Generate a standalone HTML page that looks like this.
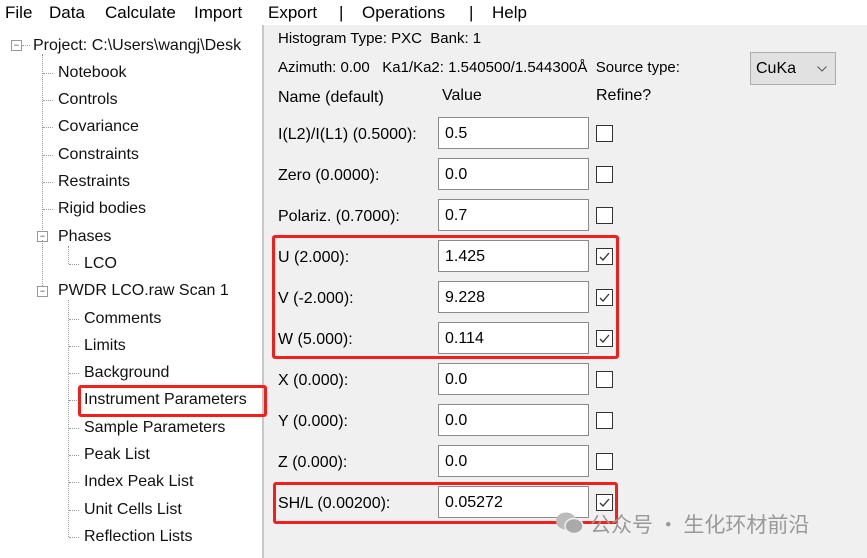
<!DOCTYPE html><html><head><meta charset="utf-8"><style>
body{margin:0;width:867px;height:558px;overflow:hidden;background:#f0f0f0;font-family:"Liberation Sans","Noto Sans CJK SC",sans-serif;font-size:16px;color:#000;position:relative}
.a{position:absolute;white-space:nowrap}
#menu{position:absolute;left:0;top:0;width:867px;height:25px;background:#fff;font-size:17px}
#tree{position:absolute;left:0;top:25px;width:262px;height:533px;background:#fff;border-right:2px solid #c8c8c8}
.t{position:absolute;white-space:nowrap;line-height:20px;color:#111}
.inp{position:absolute;left:438px;width:149px;height:30px;background:#fff;border:1px solid #8a8a8a;line-height:32px;text-indent:6px}
.cb{position:absolute;left:596px;width:15px;height:15px;border:1px solid #333;background:#fff}
.cb svg{position:absolute;left:1px;top:1px}
.lab{position:absolute;left:278px;white-space:nowrap;line-height:20px}
.red{position:absolute;border:3px solid #f0201c;border-radius:3px}
.vl{position:absolute;border-left:1px dotted #999}
.hl{position:absolute;border-top:1px dotted #999;width:10px}
</style></head><body>
<div id="menu">
<span class="a" style="left:5px;top:3px">File</span>
<span class="a" style="left:49px;top:3px">Data</span>
<span class="a" style="left:105px;top:3px">Calculate</span>
<span class="a" style="left:194px;top:3px">Import</span>
<span class="a" style="left:268px;top:3px">Export</span>
<span class="a" style="left:339px;top:3px">|</span>
<span class="a" style="left:362px;top:3px">Operations</span>
<span class="a" style="left:469px;top:3px">|</span>
<span class="a" style="left:492px;top:3px">Help</span>
</div>
<div id="tree"></div>
<div class="a" style="left:11px;top:40px;width:9px;height:9px;border:1px solid #999;background:#fff;font-size:9px;line-height:9px;text-align:center;color:#333">−</div>
<div class="hl" style="left:22px;top:45px;width:8px"></div>
<div class="vl" style="left:42px;top:54px;height:186px"></div>
<div class="a" style="left:37px;top:231px;width:9px;height:9px;border:1px solid #999;background:#fff;font-size:9px;line-height:9px;text-align:center;color:#333">−</div>
<div class="a" style="left:37px;top:286px;width:9px;height:9px;border:1px solid #999;background:#fff;font-size:9px;line-height:9px;text-align:center;color:#333">−</div>
<div class="vl" style="left:42px;top:240px;height:46px"></div>
<div class="vl" style="left:68px;top:246px;height:18px"></div>
<div class="vl" style="left:68px;top:300px;height:237px"></div>
<div class="hl" style="left:43px;top:73px"></div><div class="hl" style="left:43px;top:100px"></div><div class="hl" style="left:43px;top:127px"></div><div class="hl" style="left:43px;top:155px"></div><div class="hl" style="left:43px;top:182px"></div><div class="hl" style="left:43px;top:209px"></div>
<div class="hl" style="left:69px;top:264px"></div>
<div class="hl" style="left:69px;top:319px"></div><div class="hl" style="left:69px;top:346px"></div><div class="hl" style="left:69px;top:373px"></div><div class="hl" style="left:69px;top:400px"></div><div class="hl" style="left:69px;top:428px"></div><div class="hl" style="left:69px;top:455px"></div><div class="hl" style="left:69px;top:482px"></div><div class="hl" style="left:69px;top:510px"></div><div class="hl" style="left:69px;top:537px"></div>
<span class="t" style="left:33px;top:36px">Project: C:\Users\wangj\Desk</span>
<span class="t" style="left:58px;top:63px">Notebook</span>
<span class="t" style="left:58px;top:90px">Controls</span>
<span class="t" style="left:58px;top:117px">Covariance</span>
<span class="t" style="left:58px;top:145px">Constraints</span>
<span class="t" style="left:58px;top:172px">Restraints</span>
<span class="t" style="left:58px;top:199px">Rigid bodies</span>
<span class="t" style="left:58px;top:227px">Phases</span>
<span class="t" style="left:84px;top:254px">LCO</span>
<span class="t" style="left:58px;top:281px">PWDR LCO.raw Scan 1</span>
<span class="t" style="left:84px;top:309px">Comments</span>
<span class="t" style="left:84px;top:336px">Limits</span>
<span class="t" style="left:84px;top:363px">Background</span>
<span class="t" style="left:84px;top:390px">Instrument Parameters</span>
<span class="t" style="left:84px;top:418px">Sample Parameters</span>
<span class="t" style="left:84px;top:445px">Peak List</span>
<span class="t" style="left:84px;top:472px">Index Peak List</span>
<span class="t" style="left:84px;top:500px">Unit Cells List</span>
<span class="t" style="left:84px;top:527px">Reflection Lists</span>
<div class="red" style="left:78px;top:385px;width:183px;height:26px"></div>

<span class="lab" style="top:29px;font-size:15px">Histogram Type: PXC&nbsp; Bank: 1</span>
<span class="lab" style="top:58px;font-size:15px">Azimuth: 0.00&nbsp;&nbsp; Ka1/Ka2: 1.540500/1.544300Å&nbsp; Source type:</span>
<div class="a" style="left:750px;top:52px;width:84px;height:31px;background:#e1e1e1;border:1px solid #adadad;line-height:31px;text-indent:5px">CuKa<svg style="position:absolute;left:66px;top:13px" width="10" height="6"><path d="M0.5 0.5 L5 5 L9.5 0.5" stroke="#555" fill="none"/></svg></div>
<span class="lab" style="top:88px">Name (default)</span>
<span class="a" style="left:442px;top:87px">Value</span>
<span class="a" style="left:596px;top:87px">Refine?</span>

<span class="lab" style="top:125px">I(L2)/I(L1) (0.5000):</span><div class="inp" style="top:117px">0.5</div><div class="cb" style="top:125px"></div>
<span class="lab" style="top:166px">Zero (0.0000):</span><div class="inp" style="top:158px">0.0</div><div class="cb" style="top:166px"></div>
<span class="lab" style="top:207px">Polariz. (0.7000):</span><div class="inp" style="top:199px">0.7</div><div class="cb" style="top:207px"></div>
<span class="lab" style="top:248px">U (2.000):</span><div class="inp" style="top:240px">1.425</div><div class="cb" style="top:248px"><svg width="13" height="13"><path d="M2 7 L5 10 L11 3" stroke="#333" stroke-width="1.3" fill="none"/></svg></div>
<span class="lab" style="top:289px">V (-2.000):</span><div class="inp" style="top:281px">9.228</div><div class="cb" style="top:289px"><svg width="13" height="13"><path d="M2 7 L5 10 L11 3" stroke="#333" stroke-width="1.3" fill="none"/></svg></div>
<span class="lab" style="top:330px">W (5.000):</span><div class="inp" style="top:322px">0.114</div><div class="cb" style="top:330px"><svg width="13" height="13"><path d="M2 7 L5 10 L11 3" stroke="#333" stroke-width="1.3" fill="none"/></svg></div>
<span class="lab" style="top:371px">X (0.000):</span><div class="inp" style="top:363px">0.0</div><div class="cb" style="top:371px"></div>
<span class="lab" style="top:412px">Y (0.000):</span><div class="inp" style="top:404px">0.0</div><div class="cb" style="top:412px"></div>
<span class="lab" style="top:453px">Z (0.000):</span><div class="inp" style="top:445px">0.0</div><div class="cb" style="top:453px"></div>
<span class="lab" style="top:494px">SH/L (0.00200):</span><div class="inp" style="top:486px">0.05272</div><div class="cb" style="top:494px"><svg width="13" height="13"><path d="M2 7 L5 10 L11 3" stroke="#333" stroke-width="1.3" fill="none"/></svg></div>
<div class="red" style="left:272px;top:235px;width:341px;height:118px"></div>
<div class="red" style="left:273px;top:482px;width:339px;height:36px"></div>

<svg class="a" style="left:555px;top:510px" width="30" height="26"><ellipse cx="11" cy="11" rx="10" ry="8.5" fill="#bbb"/><ellipse cx="19" cy="16" rx="9" ry="7.5" fill="#aaa" stroke="#f0f0f0" stroke-width="1.5"/></svg>
<span class="a" style="left:590px;top:509px;font-size:21px;color:#999;font-family:'Noto Sans CJK SC',sans-serif">公众号 · 生化环材前沿</span>
</body></html>
